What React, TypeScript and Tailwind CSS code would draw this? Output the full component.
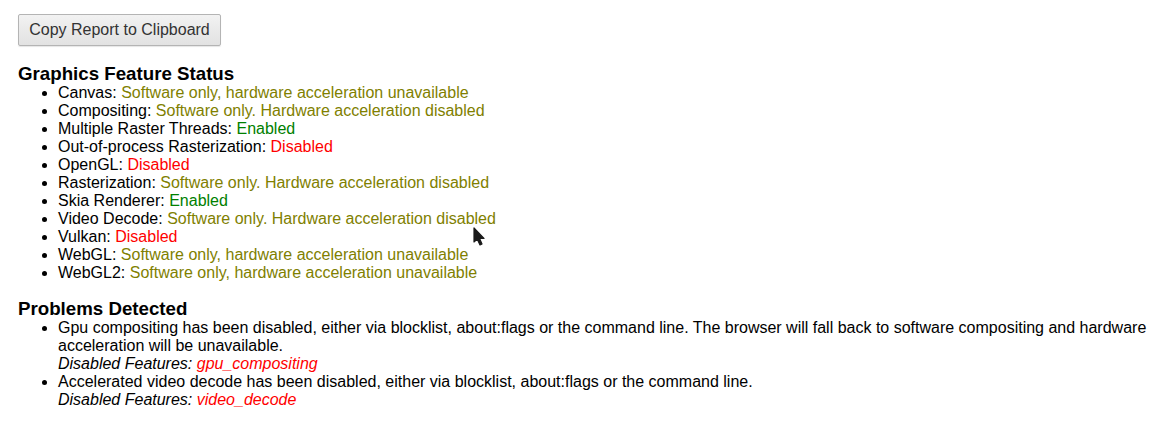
import React from "react";

const Y = "text-[#808000]";
const G = "text-[#008000]";
const R = "text-[#ff0000]";

const features: [string, string, string][] = [
  ["Canvas", "Software only, hardware acceleration unavailable", Y],
  ["Compositing", "Software only. Hardware acceleration disabled", Y],
  ["Multiple Raster Threads", "Enabled", G],
  ["Out-of-process Rasterization", "Disabled", R],
  ["OpenGL", "Disabled", R],
  ["Rasterization", "Software only. Hardware acceleration disabled", Y],
  ["Skia Renderer", "Enabled", G],
  ["Video Decode", "Software only. Hardware acceleration disabled", Y],
  ["Vulkan", "Disabled", R],
  ["WebGL", "Software only, hardware acceleration unavailable", Y],
  ["WebGL2", "Software only, hardware acceleration unavailable", Y],
];

export default function App() {
  return (
    <div
      className="relative min-h-[421px] bg-white px-[18px] pt-[14px] text-[16px] leading-[18px] text-black"
      style={{ fontFamily: '"Liberation Sans", Arial, sans-serif' }}
    >
      <button className="h-[32px] w-[203px] rounded-[2px] border border-[#b4b4b4] bg-gradient-to-b from-[#f2f2f2] to-[#e2e2e2] text-[16px] text-[#333333] shadow-[0_1px_1px_rgba(0,0,0,0.1)]">
        Copy Report to Clipboard
      </button>

      <h3 className="mt-[17px] text-[18.72px] font-bold leading-[21px]">Graphics Feature Status</h3>
      <ul className="list-disc pl-[40px]">
        {features.map(([k, v, c]) => (
          <li key={k}>
            {k}: <span className={c}>{v}</span>
          </li>
        ))}
      </ul>

      <h3 className="mt-[16px] text-[18.72px] font-bold leading-[21px]">Problems Detected</h3>
      <ul className="list-disc pl-[40px]">
        <li>
          Gpu compositing has been disabled, either via blocklist, about:flags or the command line. The browser
          will fall back to software compositing and hardware acceleration will be unavailable.
          <br />
          <i>Disabled Features: </i>
          <i className={R}>gpu_compositing</i>
        </li>
        <li>
          Accelerated video decode has been disabled, either via blocklist, about:flags or the command line.
          <br />
          <i>Disabled Features: </i>
          <i className={R}>video_decode</i>
        </li>
      </ul>

      <svg
        className="absolute left-[472px] top-[226px]"
        width="15"
        height="21"
        viewBox="0 0 15 21"
      >
        <path d="M2 2 L2 16 L5.2 13 L8 19 L10 18 L7.6 12.4 L12 12.4 Z" fill="#1a1a1a" stroke="#1a1a1a" strokeWidth="1.2" strokeLinejoin="round" />
      </svg>
    </div>
  );
}
